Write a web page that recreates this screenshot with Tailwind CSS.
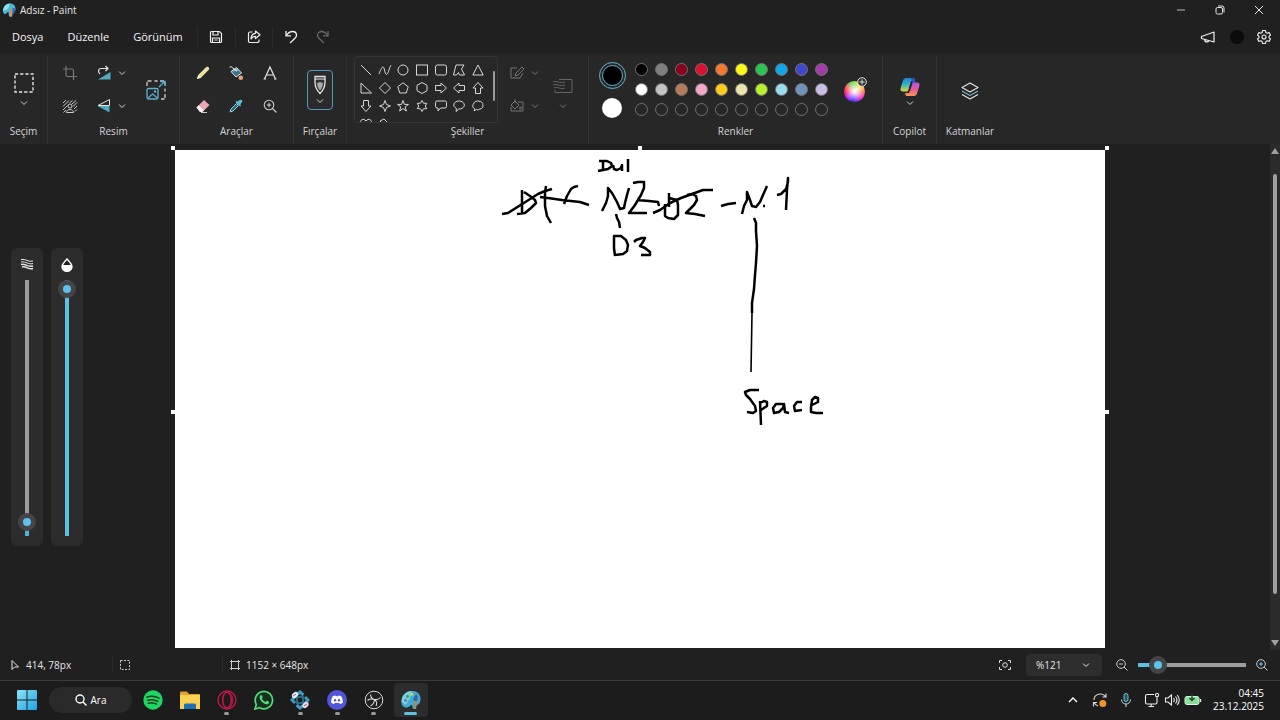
<!DOCTYPE html>
<html lang="tr">
<head>
  <meta charset="UTF-8" />
  <title>Adsız - Paint</title>
  <meta name="viewport" content="width=device-width, initial-scale=1.0" />
  <script src="https://cdn.jsdelivr.net/npm/@tailwindcss/browser@4"></script>
</head>

<body class="flex flex-col min-h-screen bg-[#202020] text-[#e6e6e6] text-[10px] leading-4 font-['Open_Sans','Noto_Sans',sans-serif] overflow-hidden">

  <!-- Shared icons -->
  <svg class="hidden">
    <symbol id="chev" viewBox="0 0 8 8"><path d="M1 2.500l3 3 3-3" fill="none" stroke="currentColor" stroke-width="1" /></symbol>
  </svg>

  <!-- ─────────── Title bar ─────────── -->
  <header class="flex items-center justify-between h-5 pl-1.5 pb-px">
    <div class="flex items-center gap-1">
      <svg class="size-3.5 -ml-1" viewBox="0 0 14 14">
        <path d="M1 8C1 4 4 .5 8 .5c4 0 5.500 2.500 5.500 5.500 0 2-1 3-2.500 3l-1 4.500H7L6.500 9C5 9 4.500 11 3 11 1.500 11 1 9.500 1 8z" fill="#4cb8d8" />
        <path d="M1 8C1 4 4 .5 8 .5L6 6z" fill="#8de0e6" />
        <path d="M8 6h2.500l-.5 7.500H8z" fill="#d98a6a" />
        <path d="M10.500 5l3 .5c0 3-1 5-3 6z" fill="#3a66b8" />
      </svg>
      <h1>Adsız - Paint</h1>
    </div>
    <div class="flex">
      <button class="w-[39px] h-5 grid place-items-center" aria-label="Simge durumuna küçült">
        <svg class="size-2.5" viewBox="0 0 10 10"><path d="M1 5h8" stroke="#bbb" stroke-width="1" /></svg>
      </button>
      <button class="w-[39px] h-5 grid place-items-center" aria-label="Önceki boyut">
        <svg class="size-2.5" viewBox="0 0 10 10" fill="none" stroke="#e6e6e6"><rect x="1" y="2.500" width="6.500" height="6.500" rx="1.500" /><path d="M3 1h4a2 2 0 0 1 2 2v4.500" /></svg>
      </button>
      <button class="w-[39px] h-5 grid place-items-center mr-0.5" aria-label="Kapat">
        <svg class="size-2.5" viewBox="0 0 10 10"><path d="M1 1l8 8M9 1l-8 8" stroke="#e6e6e6" /></svg>
      </button>
    </div>
  </header>

  <!-- ─────────── Menu bar ─────────── -->
  <nav class="flex items-center justify-between h-[34px] pl-3 pr-2 pb-px">
    <div class="flex items-center">
      <div class="flex items-center gap-6 text-[11px] text-[#f5f5f5] mr-3.5">
        <button>Dosya</button>
        <button>Düzenle</button>
        <button>Görünüm</button>
      </div>
      <button class="w-[38px] h-5 grid place-items-center border-l border-[#2b2b2b]" aria-label="Kaydet">
        <svg class="size-3.5" viewBox="0 0 14 14" fill="none" stroke="#eee" stroke-width="1.200"><path d="M1.500 2.500a1 1 0 0 1 1-1h8l2 2v8a1 1 0 0 1-1 1h-9a1 1 0 0 1-1-1z" /><path d="M4 1.500v3.500h5V1.500M3.500 12.500V8h7v4.500M5.500 10h3" /></svg>
      </button>
      <button class="w-[37px] h-5 grid place-items-center border-l border-[#2b2b2b]" aria-label="Paylaş">
        <svg class="size-3.5" viewBox="0 0 14 14" fill="none" stroke="#eee" stroke-width="1.200" stroke-linejoin="round"><path d="M5.500 2H3a1.500 1.500 0 0 0-1.500 1.500v7.500A1.500 1.500 0 0 0 3 12.500h7.500A1.500 1.500 0 0 0 12 11v-1.500" /><path d="M8.500 1l4.500 3.800-4.500 3.700V6.300C6.500 6.300 5 7 4 9c0-3.500 1.800-5.500 4.500-5.700z" /></svg>
      </button>
      <button class="w-[37px] h-5 grid place-items-center border-l border-[#2b2b2b]" aria-label="Geri al">
        <svg class="size-3.5" viewBox="0 0 14 14" fill="none" stroke="#eee" stroke-width="1.300"><path d="M2 1v4.800h5" /><path d="M2.200 5.500C4 3 6 1.500 8.500 1.500c2.500 0 4 1.700 4 3.700 0 1.500-.8 2.300-1.500 3L6 13" /></svg>
      </button>
      <button class="w-7 h-5 grid place-items-center" aria-label="Yinele">
        <svg class="size-3.5" viewBox="0 0 14 14" fill="none" stroke="#686868" stroke-width="1.300"><path d="M12 1v4.800H7" /><path d="M11.800 5.500C10 3 8 1.500 5.500 1.500c-2.500 0-4 1.700-4 3.700 0 1.500.8 2.300 1.500 3L8 13" /></svg>
      </button>
    </div>
    <div class="flex items-center gap-3">
      <button aria-label="Geri bildirim">
        <svg class="w-4 h-3.5" viewBox="0 0 16 14" fill="none" stroke="#eee" stroke-width="1.200" stroke-linejoin="round"><path d="M1.500 6.500L14 2v10L1.500 8.500zM4.500 9.500c0 3 4 3 4.200 1" /></svg>
      </button>
      <button class="size-3.5 rounded-full bg-[#0c0a0a] ml-0.5" aria-label="Hesap"></button>
      <button aria-label="Ayarlar">
        <svg class="size-4" viewBox="0 0 16 16" fill="none" stroke="#eee" stroke-width="1.100" stroke-linejoin="round"><circle cx="8" cy="8" r="2" /><path d="M6.600 1.500h2.800l.5 2 1.200.7 2-.6 1.400 2.400L13 7.400v1.200l1.500 1.400-1.400 2.400-2-.6-1.200.7-.5 2H6.600l-.5-2-1.200-.7-2 .6L1.500 10 3 8.600V7.400L1.500 6l1.400-2.400 2 .6 1.200-.7z" /></svg>
      </button>
    </div>
  </nav>

  <!-- ─────────── Ribbon ─────────── -->
  <section class="flex h-[90px] pt-0.5 bg-[#272727] text-[#d4d4d4] text-center whitespace-nowrap">

    <!-- Selection -->
    <div class="flex flex-col w-12 pb-[5px] border-r border-[#343434]">
      <div class="flex-1 flex flex-col items-center justify-center gap-1.5">
        <button aria-label="Seçim aracı"><svg class="size-5" viewBox="0 0 20 20"><rect x="1" y="1" width="18" height="18" fill="none" stroke="#e6e6e6" stroke-width="1.400" stroke-dasharray="3.200 2" /></svg></button>
        <svg class="size-2"><use href="#chev" /></svg>
      </div>
      <p>Seçim</p>
    </div>

    <!-- Image -->
    <div class="flex flex-col w-[132px] pb-[5px] border-r border-[#343434]">
      <div class="flex-1 flex items-center justify-center gap-2">
        <div class="grid grid-cols-[16px_16px_8px] gap-x-[18px] gap-y-[17px] items-center">
          <button aria-label="Kırp"><svg class="size-4" viewBox="0 0 16 16" fill="none" stroke="#777" stroke-width="1.200"><path d="M4 1v9a1.500 1.500 0 0 0 1.500 1.500H15M1 4h9a1.500 1.500 0 0 1 1.500 1.500V15" /></svg></button>
          <button aria-label="Döndür"><svg class="size-4" viewBox="0 0 16 16"><path d="M2 14.500h12.500V7z" fill="#53a9bd" /><path d="M4 9C1 6.500 3 3.500 5 3.500h7M9.500 1L12 3.500 9.500 6" fill="none" stroke="#e6e6e6" stroke-width="1.200" /></svg></button>
          <svg class="size-2 -ml-3"><use href="#chev" /></svg>
          <button aria-label="Arka planı kaldır"><svg class="size-4" viewBox="0 0 16 16" fill="none" stroke="#ccc" stroke-width="1"><path d="M1 5l3-3M1 8.500L7 2.500M1 12L5.500 7.500M1.500 14.500l2.500-2.500M7.500 5l3-2.500M10 6l4-3.500M11 8.500l4-4M12 11l3-3M13 13.500l2-2" /><circle cx="8" cy="8" r="2" /><path d="M4.500 14.500c0-4 7-4 7 0z" /></svg></button>
          <button aria-label="Çevir"><svg class="size-4" viewBox="0 0 16 16"><path d="M1.500 8L13.500 14.500V8z" fill="#53a9bd" /><path d="M2 7.500L13.500 1.500v6z" fill="none" stroke="#e6e6e6" /></svg></button>
          <svg class="size-2 -ml-3"><use href="#chev" /></svg>
        </div>
        <button aria-label="Yeniden boyutlandır"><svg class="size-5" viewBox="0 0 20 20" fill="none" stroke-width="1.300"><path d="M1 6V1h5M8.500 1h3M14 1h5v5M19 8.500v3M19 14v5h-4" stroke="#ccc" stroke-dasharray="4 1.500" /><rect x="1" y="8.500" width="11" height="10.500" rx="1.500" stroke="#5fb0d0" /><path d="M2 18l4.500-4 5 4M13 7l5.500-5.500M14.500 1.500H19V6" stroke="#5fb0d0" /><circle cx="9" cy="11.500" r=".6" stroke="#5fb0d0" /></svg></button>
      </div>
      <p>Resim</p>
    </div>

    <!-- Tools -->
    <div class="flex flex-col w-[114px] pb-[5px] border-r border-[#343434]">
      <div class="flex-1 grid grid-cols-3 content-center justify-items-center gap-y-[17px] px-1.5">
        <button aria-label="Kalem"><svg class="size-4" viewBox="0 0 16 16"><path d="M2 14l1.200-4L11 2.200c1.800-1.500 4.200.6 2.800 2.600L6 12.800z" fill="#e9e2a0" /><path d="M2 14l1.200-4 2.800 2.800z" fill="#f6efd0" /></svg></button>
        <button aria-label="Doldur"><svg class="size-4" viewBox="0 0 16 16"><path d="M3 6.500L8.500 2.500 13.500 8l-5.500 4z" fill="#3b7286" stroke="#dfe9ee" stroke-linejoin="round" /><path d="M4 6.500l7-1L8 3z" fill="#8ec6d8" /><path d="M1.500 2.500L3 1.500l6 5" fill="none" stroke="#e6e6e6" /><circle cx="12.800" cy="12.800" r="2.300" fill="#e9a37c" /></svg></button>
        <button aria-label="Metin"><svg class="size-4" viewBox="0 0 16 16"><path d="M2.500 14L8 2l5.500 12M4.500 10h7M1.500 14H4M12 14h2.500" fill="none" stroke="#e6e6e6" stroke-width="1.200" /></svg></button>
        <button aria-label="Silgi"><svg class="size-4" viewBox="0 0 16 16"><path d="M1.500 9.500L9 2l5.500 5-7 7H5z" fill="#eba6b4" /><path d="M1.500 9.500l2.200-2.200 5.500 5-2 1.700H5z" fill="#f7f0f0" /><path d="M6 14.500h6" stroke="#ccc" /></svg></button>
        <button aria-label="Renk seçici"><svg class="size-4" viewBox="0 0 16 16"><path d="M2 14l1-3 5.500-5.500 2 2L5 13z" fill="#2d6376" stroke="#8fd0e4" /><path d="M7.500 4l1.300-1.200 1 .8L11.500 2c2-1 3.500.7 2.500 2.500L12.300 6.300l.8 1L12 8.500z" fill="#5fb8d4" /></svg></button>
        <button aria-label="Büyüteç"><svg class="size-4" viewBox="0 0 16 16" fill="none" stroke="#ccc" stroke-width="1.100"><circle cx="7" cy="7" r="4.800" /><path d="M10.500 10.500l4 4M7 4.800v4.400M4.800 7h4.400" /></svg></button>
      </div>
      <p>Araçlar</p>
    </div>

    <!-- Brushes -->
    <div class="flex flex-col w-[53px] pb-[5px] border-r border-[#303030]">
      <div class="flex-1 flex items-center justify-center">
        <button class="flex flex-col items-center justify-between w-[26px] h-10 py-1 rounded border border-[#4b9cb8] bg-[#2b2b2b]" aria-label="Fırça">
          <svg class="w-3 h-5" viewBox="0 0 12 20"><path d="M1 1.500h10v6c0 4-2 8-5 11-3-3-5-7-5-11z" fill="#333" stroke="#e6e6e6" stroke-width="1.300" /><path d="M1 4h10" stroke="#e6e6e6" /><path d="M3 8l3-1 3 1c0 3-1.500 5.500-3 7.500C4.500 13.500 3 11 3 8z" fill="#aaa" /></svg>
          <svg class="size-2"><use href="#chev" /></svg>
        </button>
      </div>
      <p>Fırçalar</p>
    </div>

    <!-- Shapes -->
    <div class="flex flex-col w-[242px] pb-[5px] border-r border-[#343434]">
      <div class="flex-1 flex items-center pl-[7px]">
        <div class="flex h-[67px] w-36 border border-[#353535] rounded-sm overflow-hidden">
          <div class="grid grid-cols-7 auto-rows-[18px] justify-items-center content-start pt-1 pl-0.5 w-[132px] [&_svg]:size-[14px] [&_svg]:fill-none [&_svg]:stroke-[#d8d8d8] [&_button]:grid [&_button]:place-items-center">
            <button aria-label="Çizgi"><svg viewBox="0 0 14 14"><path d="M2 2l10 10" /></svg></button>
            <button aria-label="Eğri"><svg viewBox="0 0 14 14"><path d="M1 11C4 3 5.500 2 6.500 7s2.500 6 4 1.500S12 4 13 2" /></svg></button>
            <button aria-label="Oval"><svg viewBox="0 0 14 14"><circle cx="7" cy="7" r="5" /></svg></button>
            <button aria-label="Dikdörtgen"><svg viewBox="0 0 14 14"><rect x="1.500" y="2" width="11" height="10" /></svg></button>
            <button aria-label="Yuvarlatılmış dikdörtgen"><svg viewBox="0 0 14 14"><rect x="1.500" y="2" width="11" height="10" rx="2" /></svg></button>
            <button aria-label="Çokgen"><svg viewBox="0 0 14 14"><path d="M4 2h8L9.500 6l3 6H7.500l-1-2.500L4.500 12H1.500z" /></svg></button>
            <button aria-label="Üçgen"><svg viewBox="0 0 14 14"><path d="M7 2l5.200 10H1.800z" /></svg></button>
            <button aria-label="Dik üçgen"><svg viewBox="0 0 14 14"><path d="M2 2v10h10.500z" /></svg></button>
            <button aria-label="Elmas"><svg viewBox="0 0 14 14"><path d="M7 1.500L12.500 7 7 12.500 1.500 7z" /></svg></button>
            <button aria-label="Beşgen"><svg viewBox="0 0 14 14"><path d="M7 1.800l5.200 4-2 6.200H3.800l-2-6.200z" /></svg></button>
            <button aria-label="Altıgen"><svg viewBox="0 0 14 14"><path d="M7 1.500l5 2.800v5.400l-5 2.800-5-2.800V4.300z" /></svg></button>
            <button aria-label="Sağ ok"><svg viewBox="0 0 14 14"><path d="M1.500 4.500H7V2l5.500 5L7 12V9.500H1.500z" /></svg></button>
            <button aria-label="Sol ok"><svg viewBox="0 0 14 14"><path d="M12.500 4.500H7V2L1.500 7 7 12V9.500h5.500z" /></svg></button>
            <button aria-label="Yukarı ok"><svg viewBox="0 0 14 14"><path d="M4.500 12.500V7H2l5-5.500L12 7H9.500v5.500z" /></svg></button>
            <button aria-label="Aşağı ok"><svg viewBox="0 0 14 14"><path d="M4.500 1.500V7H2l5 5.500L12 7H9.500V1.500z" /></svg></button>
            <button aria-label="Dört köşeli yıldız"><svg viewBox="0 0 14 14"><path d="M7 1.500L8.500 5.500l4 1.500-4 1.500L7 12.500 5.500 8.500l-4-1.500 4-1.500z" /></svg></button>
            <button aria-label="Beş köşeli yıldız"><svg viewBox="0 0 14 14"><path d="M7 1.500l1.400 3.900h4.100L9.200 7.900l1.200 4.100L7 9.600 3.600 12l1.200-4.100L1.500 5.400h4.100z" /></svg></button>
            <button aria-label="Altı köşeli yıldız"><svg viewBox="0 0 14 14"><path d="M7 1.500l1.600 2.800h3.200L10.200 7l1.600 2.700H8.600L7 12.500 5.400 9.700H2.200L3.800 7 2.200 4.300h3.200z" /></svg></button>
            <button aria-label="Yuvarlatılmış belirtme"><svg viewBox="0 0 14 14"><path d="M3 2h8a1.500 1.500 0 0 1 1.500 1.500v4A1.500 1.500 0 0 1 11 9H6.500L4 12V9H3a1.500 1.500 0 0 1-1.500-1.500v-4A1.500 1.500 0 0 1 3 2z" /></svg></button>
            <button aria-label="Oval belirtme"><svg viewBox="0 0 14 14"><path d="M4 12.500l.5-3C-.5 7 2 2 7 2s7.500 5 3 7.300c-1 .5-2 .7-3.200.7z" /></svg></button>
            <button aria-label="Bulut belirtme"><svg viewBox="0 0 14 14"><path d="M3 12l1-2C1.500 9 1.200 6.500 2.500 5 3 2.500 6 1.500 8 2.200c2.500 0 4 1.800 3.800 3.500.8 2-.8 4.300-3 4.300-1 1-2.500 1-3.500.5z" /></svg></button>
            <button aria-label="Kalp"><svg viewBox="0 0 14 14"><path d="M7 12L2 7C0 4 4 0 7 4c3-4 7 0 5 3z" /></svg></button>
            <button aria-label="Şimşek"><svg viewBox="0 0 14 14"><path d="M2 4l4-2 3 3 1 2 3 5-6-3z" /></svg></button>
          </div>
          <div class="w-0.5 h-[30px] mt-3.5 ml-1.5 rounded bg-[#9a9a9a]"></div>
        </div>
        <div class="grid grid-cols-[16px_8px] gap-x-1.5 gap-y-[17px] items-center ml-[11px] text-[#777]">
          <button aria-label="Şekil anahattı"><svg class="size-4" viewBox="0 0 16 16" fill="none" stroke="#777"><path d="M8 3H2v10h9l3-5M6 11l1-3 6-6 2 2-6 6z" /></svg></button>
          <svg class="size-2"><use href="#chev" /></svg>
          <button aria-label="Şekil dolgusu"><svg class="size-4" viewBox="0 0 16 16" fill="none" stroke="#777"><path d="M9 4h5v9H2V9M2 7l4-4 4 4-4 4zM6 1v4" /><circle cx="11.500" cy="10" r="1" /></svg></button>
          <svg class="size-2"><use href="#chev" /></svg>
        </div>
        <div class="flex flex-col items-center gap-2 ml-3.5 pt-2 text-[#777]">
          <button aria-label="Boyut"><svg class="w-5 h-4" viewBox="0 0 20 16" fill="none" stroke="#666"><path d="M6 1.500h13v13H2V12M0 4c4-2 6 2 12 0M0 7c4-2 6 2 12 0M1 10c4-2 6 2 11 0" /></svg></button>
          <svg class="size-2"><use href="#chev" /></svg>
        </div>
      </div>
      <p>Şekiller</p>
    </div>

    <!-- Colours -->
    <div class="flex flex-col w-[294px] pb-[5px] border-r border-[#343434]">
      <div class="flex-1 flex items-center pl-[9px]">
        <div class="flex flex-col items-center gap-[9px] w-7">
          <button class="grid place-items-center size-[27px] rounded-full border border-[#62b5d2]" aria-label="Renk 1"><span class="size-[21px] rounded-full bg-black border border-[#62b5d2]"></span></button>
          <button class="size-5 rounded-full bg-white" aria-label="Renk 2"></button>
        </div>
        <div class="grid grid-cols-10 gap-x-[7px] gap-y-[7px] ml-[9px] [&_button]:size-[13px] [&_button]:rounded-full [&_button]:border [&_button]:border-[#707070]">
          <button class="bg-black" aria-label="Siyah"></button>
          <button class="bg-[#7f7f7f]" aria-label="Gri"></button>
          <button class="bg-[#88001b]" aria-label="Koyu kırmızı"></button>
          <button class="bg-[#dd1030]" aria-label="Kırmızı"></button>
          <button class="bg-[#f47a30]" aria-label="Turuncu"></button>
          <button class="bg-[#fff915]" aria-label="Sarı"></button>
          <button class="bg-[#2bc451]" aria-label="Yeşil"></button>
          <button class="bg-[#14a5e8]" aria-label="Turkuaz"></button>
          <button class="bg-[#3f48cc]" aria-label="Çivit"></button>
          <button class="bg-[#a33ca6]" aria-label="Mor"></button>
          <button class="bg-white" aria-label="Beyaz"></button>
          <button class="bg-[#c3c3c3]" aria-label="Açık gri"></button>
          <button class="bg-[#b97a5a]" aria-label="Kahverengi"></button>
          <button class="bg-[#f4a6ca]" aria-label="Gül"></button>
          <button class="bg-[#ffca18]" aria-label="Altın"></button>
          <button class="bg-[#ebe5ad]" aria-label="Açık sarı"></button>
          <button class="bg-[#b7f12c]" aria-label="Limon"></button>
          <button class="bg-[#99dcec]" aria-label="Açık turkuaz"></button>
          <button class="bg-[#7092be]" aria-label="Mavi gri"></button>
          <button class="bg-[#c8bfe7]" aria-label="Lavanta"></button>
          <button aria-label="Özel renk 1"></button>
          <button aria-label="Özel renk 2"></button>
          <button aria-label="Özel renk 3"></button>
          <button aria-label="Özel renk 4"></button>
          <button aria-label="Özel renk 5"></button>
          <button aria-label="Özel renk 6"></button>
          <button aria-label="Özel renk 7"></button>
          <button aria-label="Özel renk 8"></button>
          <button aria-label="Özel renk 9"></button>
          <button aria-label="Özel renk 10"></button>
        </div>
        <button class="relative size-[21px] ml-4 mt-1 rounded-full bg-[radial-gradient(circle,white_5%,transparent_65%),conic-gradient(#8be04a,#ffe14a_50deg,#ff7a5c_90deg,#ff30c8_130deg,#3b35ff_190deg,#c020ff_230deg,#ff2060_270deg,#ff5a50_300deg,#5fe070_340deg,#8be04a)]" aria-label="Renkleri düzenle">
          <svg class="absolute -top-1 -right-0.5 size-2.5" viewBox="0 0 10 10"><circle cx="5" cy="5" r="4.300" fill="#333" stroke="#ddd" /><path d="M5 2.500v5M2.500 5h5" stroke="#ddd" /></svg>
        </button>
      </div>
      <p>Renkler</p>
    </div>

    <!-- Copilot -->
    <div class="flex flex-col w-[54px] pb-[5px] border-r border-[#343434]">
      <div class="flex-1 flex flex-col items-center justify-center gap-0.5 pt-1">
        <button aria-label="Copilot menüsü">
          <svg class="size-5" viewBox="0 0 20 20">
            <defs>
              <linearGradient id="cpA" x1="0" y1="0" x2="0" y2="1"><stop offset="0" stop-color="#1f7fd8" /><stop offset=".5" stop-color="#35b8c0" /><stop offset="1" stop-color="#e8d23c" /></linearGradient>
              <linearGradient id="cpB" x1="0" y1="0" x2="0" y2="1"><stop offset="0" stop-color="#b05be8" /><stop offset=".5" stop-color="#e6569b" /><stop offset="1" stop-color="#f79a4b" /></linearGradient>
            </defs>
            <path d="M6 1h7c1 0 1.500.7 1.700 1.500L15.200 4H11L8.500 13c-.3 1-.8 1.500-2 1.500H3C1 14.500 0 13 .6 11L3 3.500C3.500 2 4.500 1 6 1z" fill="url(#cpA)" />
            <path d="M13.500 5.500H17c2 0 3 1.500 2.400 3.500L17 16.500c-.5 1.500-1.500 2.500-3 2.500H7c-1 0-1.500-.7-1.700-1.500L5 16h4l2.500-9c.3-1 .8-1.500 2-1.500z" fill="url(#cpB)" />
            <path d="M10.500 6.500h2L10 14H8.200z" fill="#272727" />
            <path d="M11 1h2c1 0 1.500.7 1.700 1.500l.8 3h-2c-1.300 0-1.500-1-1.800-2z" fill="#2a55c8" />
          </svg>
        </button>
        <svg class="size-2"><use href="#chev" /></svg>
      </div>
      <p>Copilot</p>
    </div>

    <!-- Layers -->
    <div class="flex flex-col w-[66px] pb-[5px]">
      <div class="flex-1 flex items-center justify-center pt-0.5">
        <button aria-label="Katmanları göster"><svg class="size-[18px]" viewBox="0 0 18 18" fill="none" stroke="#e6e6e6" stroke-width="1.100" stroke-linejoin="round"><path d="M9 1l8 4.500L9 10 1 5.500z" /><path d="M1 9l8 4.500L17 9" stroke="#6fb4d0" /><path d="M1 12.500L9 17l8-4.500" /></svg></button>
      </div>
      <p>Katmanlar</p>
    </div>
  </section>

  <!-- ─────────── Workspace ─────────── -->
  <main class="flex-1 grid grid-cols-[175px_1fr_175px]">

    <!-- Brush size and opacity -->
    <div class="flex items-center gap-2 pl-[11px]">
      <label class="flex flex-col items-center justify-between w-8 h-[298px] py-2.5 rounded-md bg-[#2c2c2c]">
        <svg class="w-3.5 h-3" viewBox="0 0 14 12" fill="none" stroke="#e6e6e6"><path d="M1 1.500c5-1 7 3 12 1.500M1 4c5-1 7 3 12 1.500" /><path d="M1 6.500c5-1 7 3 12 1.500M2 9c5-1 6 3 11 1.500" stroke-width="1.500" /></svg>
        <input type="range" min="0" max="100" value="2" aria-label="Fırça boyutu"
               class="appearance-none w-[18px] h-64 [writing-mode:vertical-lr] [direction:rtl] bg-[linear-gradient(to_top,#4cb4dc_5%,#9c9c9c_5%)] bg-[length:4px_100%] bg-center bg-no-repeat [&::-webkit-slider-thumb]:appearance-none [&::-webkit-slider-thumb]:size-[18px] [&::-webkit-slider-thumb]:rounded-full [&::-webkit-slider-thumb]:border-[5px] [&::-webkit-slider-thumb]:border-[#454545] [&::-webkit-slider-thumb]:bg-[#5cc3f0]" />
      </label>
      <label class="flex flex-col items-center justify-between w-8 h-[298px] py-2.5 rounded-md bg-[#2c2c2c]">
        <svg class="w-3 h-3.5" viewBox="0 0 12 14"><path d="M6 1C8 3.500 11 6 11 8.700A5 4.600 0 0 1 1 8.700C1 6 4 3.500 6 1z" fill="#222" stroke="#fff" stroke-width="1.300" /><path d="M1 7h10v2a5 4.500 0 0 1-10 0z" fill="#fff" /></svg>
        <input type="range" min="0" max="100" value="100" aria-label="Opaklık"
               class="appearance-none w-[18px] h-64 [writing-mode:vertical-lr] [direction:rtl] bg-[linear-gradient(#5cbfe4,#5cbfe4)] bg-[length:4px_100%] bg-center bg-no-repeat [&::-webkit-slider-thumb]:appearance-none [&::-webkit-slider-thumb]:size-[18px] [&::-webkit-slider-thumb]:rounded-full [&::-webkit-slider-thumb]:border-[5px] [&::-webkit-slider-thumb]:border-[#454545] [&::-webkit-slider-thumb]:bg-[#5cc3f0]" />
      </label>
    </div>

    <!-- Sheet -->
    <div class="pt-1.5 pb-0.5 flex">
      <div class="relative flex-1 bg-white">
        <svg class="absolute inset-0 size-full" viewBox="175 150 930 498" preserveAspectRatio="xMidYMin meet" fill="none" stroke="#000" stroke-width="2.500" stroke-linejoin="round">
          <!-- Dul -->
          <path d="M603 161v9M599 161l8 0 4 2 1 3-4 3-10 2M613 165l1 4 3 1 4-2 1-3v6M628 159v13" />
          <!-- D1, crossed out -->
          <path d="M502 214l6-1 19-12 11-7 7-3 7-2" />
          <path d="M522 190v23M524 192l6 4 5 4 1 3-5 5-6 5-8 1M546 186l-1 7v13l2 10 4 7M540 197l8 1 14 2 18 2 9 3M578 186l-4 1-3 2-4 7-3 8" />
          <!-- N2 -->
          <path d="M602 211l4-8 2-7v-8l4 5 5 9 3 7 4-1 1-5 2-8 2-7M633 183l5-1h6v6l-3 7-6 10-6 8h18M637 200l12 1 9 1 1 4" />
          <!-- D2, crossed out -->
          <path d="M653 213l7-3 10-7 11-5 11-4 11-4 10 0" />
          <path d="M669 193v14M665 204v12l3 2 6 1 4-4v-10l-1-5-8-2M687 195l5-1 4 2 1 4-3 5-8 8 9 1 10 2" />
          <!-- N1 -->
          <path d="M721 206l7-2 8-1M742 214l2-8 3-6v-8l3 8 2 6 4 1 4-5 3-7 4-9M763 206h2M777 195l4-1 5-5 2-7v-4l-1 12-1 20" />
          <!-- D3 -->
          <path d="M616 214l1 4 2 4 1 6M614 236v12l1 8M613 236l8 0 5 4 2 5-1 6-4 3-8 1M634 242l2-2 6-2 3 0-2 4-3 4 5 2 5 4 0 3-9 0" />
          <!-- Space -->
          <path d="M754 218l2 5 0 8 1 15-1 17-1 12" />
          <path d="M755 275l-1 14-2 14v10" />
          <path d="M752 313l-1 59" stroke-width="1.600" />
          <path d="M759 390h-9l-5 2 1 3 4 4 5 7 1 5-3 2-6-1M760 401l1 24M760 403l4-2 3 1v4l-6 4M783 404l-7 0-3 4 1 5 5-1 4-4 1-4 1 8 4 1M802 402l-5 0-3 4 1 5 7-1M812 405l6-3 0-4-3-1-3 3-1 7 0 5 5 1h7" />
        </svg>
        <!-- Resize handles -->
        <span class="absolute -top-1 -left-1 size-1 bg-white"></span>
        <span class="absolute -top-1 left-1/2 -translate-x-1/2 size-1 bg-white"></span>
        <span class="absolute -top-1 -right-1 size-1 bg-white"></span>
        <span class="absolute top-[260px] -left-1 size-1 bg-white"></span>
        <span class="absolute top-[260px] -right-1 size-1 bg-white"></span>
      </div>
    </div>

    <!-- Scrollbar -->
    <div class="flex justify-end">
      <div class="flex flex-col items-center w-2.5 py-1 bg-[#2a2a2a]">
        <svg class="w-2 h-1.5" viewBox="0 0 8 6"><path d="M4 0l4 6H0z" fill="#a0a0a0" /></svg>
        <div class="flex-1 w-full flex justify-center pt-5 pb-[46px]"><div class="w-1 rounded bg-[#9f9f9f]"></div></div>
        <svg class="w-2 h-1.5" viewBox="0 0 8 6"><path d="M4 6L0 0h8z" fill="#a0a0a0" /></svg>
      </div>
    </div>
  </main>

  <!-- ─────────── Status bar ─────────── -->
  <footer class="flex items-center justify-between h-[31px] pl-2.5 pr-3 border-b border-[#3a3a3a]">
    <div class="flex items-center">
      <div class="flex items-center gap-1.5 w-[102px]">
        <svg class="size-2.5" viewBox="0 0 10 10"><path d="M2 .5v9l2.500-2.500h4z" fill="none" stroke="#e6e6e6" /></svg>
        <span>414, 78px</span>
      </div>
      <div class="w-[110px] h-4 pl-[7px] flex items-center border-l border-[#2b2b2b]">
        <svg class="size-2.5" viewBox="0 0 10 10"><rect x=".5" y=".5" width="9" height="9" fill="none" stroke="#ccc" stroke-dasharray="2 1.400" /></svg>
      </div>
      <div class="h-4 pl-[7px] flex items-center gap-1.5 border-l border-[#2b2b2b]">
        <svg class="size-2.5" viewBox="0 0 10 10"><path d="M0 1.500h10M0 8.500h10M1.500 0v10M8.500 0v10" fill="none" stroke="#ccc" /></svg>
        <span>1152 × 648px</span>
      </div>
    </div>
    <div class="flex items-center gap-3.5">
      <button aria-label="Ekrana sığdır"><svg class="w-3.5 h-3" viewBox="0 0 14 12" fill="none" stroke="#ddd"><path d="M4 1.500H1.500V4M10 1.500h2.500V4M4 10.500H1.500V8M10 10.500h2.500V8" /><circle cx="7" cy="6" r="2.300" /></svg></button>
      <div class="relative flex items-center">
        <select class="appearance-none w-[76px] h-[22px] pl-2.5 rounded-sm bg-[#2d2d2d] text-[10px]" aria-label="Yakınlaştırma">
          <option>%121</option>
        </select>
        <svg class="absolute right-3 size-2 pointer-events-none"><use href="#chev" /></svg>
      </div>
      <div class="flex items-center gap-2.5">
        <button aria-label="Uzaklaştır"><svg class="size-3" viewBox="0 0 12 12" fill="none" stroke="#ccc"><circle cx="5" cy="5" r="4.300" /><path d="M8 8l3.500 3.500M3 5h4" /></svg></button>
        <input type="range" min="0" max="100" value="12" aria-label="Yakınlaştırma düzeyi"
               class="appearance-none w-[108px] h-[18px] bg-[linear-gradient(to_right,#5cbfe4_18%,#9c9c9c_18%)] bg-[length:100%_4px] bg-center bg-no-repeat [&::-webkit-slider-thumb]:appearance-none [&::-webkit-slider-thumb]:size-[18px] [&::-webkit-slider-thumb]:rounded-full [&::-webkit-slider-thumb]:border-[5px] [&::-webkit-slider-thumb]:border-[#454545] [&::-webkit-slider-thumb]:bg-[#5cc3f0]" />
        <button aria-label="Yakınlaştır"><svg class="size-3" viewBox="0 0 12 12" fill="none" stroke="#ccc"><circle cx="5" cy="5" r="4.300" /><path d="M8 8l3.500 3.500" /><path d="M3 5h4M5 3v4" stroke="#6cc4e4" /></svg></button>
      </div>
    </div>
  </footer>

  <!-- ─────────── Taskbar ─────────── -->
  <div class="flex items-center justify-between h-[39px] pl-[17px] pr-4 pb-0.5 bg-[#1c1c1c] text-white">
    <div class="flex items-center">
      <button class="mr-3" aria-label="Başlat">
        <svg class="size-5" viewBox="0 0 20 20">
          <defs><linearGradient id="win" x1="0" y1="0" x2="1" y2="1"><stop offset="0" stop-color="#8ae4f8" /><stop offset="1" stop-color="#1ea0e0" /></linearGradient></defs>
          <path d="M0 1a1 1 0 0 1 1-1h8.500v9.500H0zM10.500 0H19a1 1 0 0 1 1 1v8.500h-9.500zM0 10.500h9.500V20H1a1 1 0 0 1-1-1zM10.500 10.500H20V19a1 1 0 0 1-1 1h-8.500z" fill="url(#win)" />
        </svg>
      </button>
      <button class="flex items-center justify-center gap-1 w-[83px] h-[26px] rounded-full bg-[#2a2a2a] mr-[3px]">
        <svg class="size-3" viewBox="0 0 12 12" fill="none" stroke="#fff" stroke-width="1.400"><circle cx="5" cy="5" r="4" /><path d="M8 8l3.500 3.500" /></svg>
        Ara
      </button>
      <div class="grid grid-cols-8 w-[294px] justify-items-center [&_button]:relative [&_button]:grid [&_button]:place-items-center [&_button]:w-[34px] [&_button]:h-[34px] [&_svg]:size-5">
        <button aria-label="Spotify">
          <svg viewBox="0 0 20 20"><circle cx="10" cy="10" r="9.700" fill="#1ed760" /><path d="M4 7c4-1.200 8.500-.8 12 1.200M4.700 10.200c3.500-1 7-.6 10 1.100M5.300 13.200c3-.8 5.700-.5 8.200 1" fill="none" stroke="#153820" stroke-width="1.500" stroke-linecap="round" /></svg>
        </button>
        <button aria-label="Dosya Gezgini">
          <svg viewBox="0 0 20 20"><path d="M0 2.500A1 1 0 0 1 1 1.500h6l2 2.500h10a1 1 0 0 1 1 1V19H0z" fill="#e0a02c" /><path d="M0 5h20v14H0z" fill="#f9d252" /><path d="M4 19v-4a1.500 1.500 0 0 1 1.500-1.500h9A1.500 1.500 0 0 1 16 15v4z" fill="#1f6fb4" /></svg>
        </button>
        <button aria-label="Opera GX">
          <svg viewBox="0 0 20 20" fill="none" stroke="#c01848"><circle cx="10" cy="10" r="9" stroke-width="1.400" /><ellipse cx="10" cy="10" rx="4.300" ry="7.800" stroke-width="1.600" /><path d="M12 2.500c5 2 5 13 0 15" /></svg>
          <span class="absolute bottom-0.5 w-[5px] h-[3px] rounded bg-[#999]"></span>
        </button>
        <button aria-label="WhatsApp">
          <svg viewBox="0 0 20 20"><path d="M1 19l1.300-4.600A8.700 8.700 0 1 1 5.600 17.700z" fill="#17301f" stroke="#4fdc74" stroke-width="1.700" /><path d="M6.500 5.200c.6-.5 1.200-.3 1.500.4l.6 1.400c.2.500-.5 1.100-.8 1.500.8 1.600 2 2.700 3.700 3.400.5-.5 1-1.400 1.500-1.200l1.700.9c.8.500.2 1.800-.5 2.300-2 1.200-4.700-.4-6.200-1.900C6.300 10.300 4.600 6.900 6.500 5.200z" fill="#4fdc74" /></svg>
        </button>
        <button aria-label="Görev uygulaması">
          <svg viewBox="0 0 20 20"><g fill="none" stroke="#3d9cc0" stroke-width="3"><path d="M7 4.500L10 2l3.500 3M15 7l3 3-3 3.500M13 15.500L10 18l-3.500-3M5 13l-3-3 3-3.500" /></g><rect x="7" y="7" width="6" height="6" fill="none" stroke="#2d7d9c" stroke-width="1.600" /><ellipse cx="5" cy="5" rx="3.500" ry="2.500" transform="rotate(-40 5 5)" fill="#e8eef4" /><ellipse cx="15.500" cy="15" rx="3.500" ry="2.500" transform="rotate(-40 15.500 15)" fill="#e8dcee" /><path d="M3 6l3-2M14 16l3-2" stroke="#a05070" /></svg>
          <span class="absolute bottom-0.5 w-[5px] h-[3px] rounded bg-[#999]"></span>
        </button>
        <button aria-label="Discord">
          <svg viewBox="0 0 20 20"><circle cx="10" cy="10" r="10" fill="#5157d8" /><path d="M5.800 6.300c1-.6 2-.8 2.700-.9l.4.8h2.200l.4-.8c.8.100 1.800.3 2.700.9 1.200 2 1.800 4.300 1.600 6.500-.9.700-1.900 1.100-2.800 1.200l-.7-1.100H7.700L7 14c-.9-.1-1.900-.5-2.800-1.200-.2-2.200.4-4.500 1.600-6.500z" fill="#fff" /><circle cx="8" cy="10.300" r="1.200" fill="#5157d8" /><circle cx="12" cy="10.300" r="1.200" fill="#5157d8" /></svg>
          <span class="absolute bottom-0.5 w-[5px] h-[3px] rounded bg-[#999]"></span>
        </button>
        <button aria-label="OBS Studio">
          <svg viewBox="0 0 20 20" fill="none" stroke="#d8d8d8"><circle cx="10" cy="10" r="8.800" fill="#202020" /><path d="M6.500 4.500c.3 2.700 1.500 4.500 4 5 2.500.4 4.500-.3 6-2M10.500 9.500c-.3 3-1 5-4 6.500M10.500 9.500C8 8.500 5.500 8.500 3.500 10.500M10.500 9.500c2 1.500 2.700 4 1.500 6.500" stroke-width="1.100" /></svg>
          <span class="absolute bottom-0.5 w-[5px] h-[3px] rounded bg-[#999]"></span>
        </button>
        <button class="rounded bg-[#2c2c2c]" aria-label="Paint">
          <svg viewBox="0 0 20 20"><path d="M.5 12C.5 5 5 1 11 1c5.500 0 8.500 3.500 8.500 8 0 3.500-1.500 6-4 6l-1 4H12l-1-4c-2 0-2.500 2.500-5.500 2.500-3.500 0-5-2.500-5-5.500z" fill="#45a9d2" /><path d="M.5 12C.5 5 5 1 11 1L9 8l-4 7z" fill="#74d2e4" /><circle cx="4.500" cy="10.500" r="1.400" fill="#7a6ac8" /><circle cx="6.500" cy="6.500" r="1.400" fill="#3f9c50" /><circle cx="11" cy="4.500" r="1.400" fill="#d8d058" /><path d="M12.500 9.500c-.5-2.500 1.500-4 3-5.500.8 1.500 1.500 3.500 1 5.500l-.5 1.500h-3z" fill="#2d6aa8" /><path d="M13 11h2.800l-.6 8h-1.600z" fill="#b8874c" /></svg>
          <span class="absolute bottom-0.5 w-[13px] h-[3px] rounded bg-[#5cbfe4]"></span>
        </button>
      </div>
    </div>

    <!-- Tray -->
    <div class="flex items-center gap-1">
      <button class="mr-2.5" aria-label="Gizli simgeleri göster"><svg class="size-2.5" viewBox="0 0 10 10"><path d="M1 7l4-4 4 4" fill="none" stroke="#fff" stroke-width="1.400" /></svg></button>
      <button class="mr-2" aria-label="Güncelleme"><svg class="size-4" viewBox="0 0 16 16" fill="none" stroke="#ddd" stroke-width="1.100"><path d="M2 8c0-6 8-8 11.500-3.500M14 1.500v3.500h-3.500M6 14C4 13.500 3 12 2.500 11M1.500 14.500v-4H5" /><circle cx="10.800" cy="11.500" r="3.500" fill="#f0932b" stroke="none" /></svg></button>
      <button class="mr-2" aria-label="Mikrofon"><svg class="w-3 h-4" viewBox="0 0 12 16" fill="none"><rect x="4" y="1.500" width="4" height="8" rx="2" fill="#29525c" stroke="#6cc4d8" /><path d="M1.500 7.500c0 6 9 6 9 0M6 12v3" stroke="#bde0e8" /></svg></button>
      <button aria-label="Ağ"><svg class="size-4" viewBox="0 0 16 16" fill="none" stroke="#eee" stroke-width="1.100"><path d="M10 2.500H3A1.500 1.500 0 0 0 1.500 4v6.500A1.500 1.500 0 0 0 3 12h8.500A1.500 1.500 0 0 0 13 10.500V8M4.500 14.500H10M7.200 12v2.500" /><rect x="11.500" y="1.500" width="3" height="3" rx="1" /><path d="M13 4.500V8" /></svg></button>
      <button aria-label="Ses"><svg class="w-4 h-3.5" viewBox="0 0 16 14" fill="none" stroke="#eee" stroke-width="1.100"><path d="M1.500 5h2.500l3.500-3v10L4 9H1.500zM9.500 5c.8 1 .8 3 0 4M11.500 3.500c1.700 2 1.700 5 0 7M13.300 2c2.300 3 2.300 7 0 10" /></svg></button>
      <button aria-label="Pil"><svg class="w-[18px] h-3.5" viewBox="0 0 18 14"><rect x="1" y="3.500" width="14" height="8" rx="2" fill="#8bdc98" stroke="#d8f4dc" /><path d="M16.500 6v3" stroke="#d8f4dc" stroke-width="1.400" /><path d="M8 1v6M5.500 5L8 7.500 10.500 5" fill="none" stroke="#204a2a" stroke-width="1.400" /></svg></button>
      <div class="w-[58px] text-right leading-[13px]">
        <p>04:45</p>
        <p>23.12.2025</p>
      </div>
    </div>
  </div>

</body>
</html>
